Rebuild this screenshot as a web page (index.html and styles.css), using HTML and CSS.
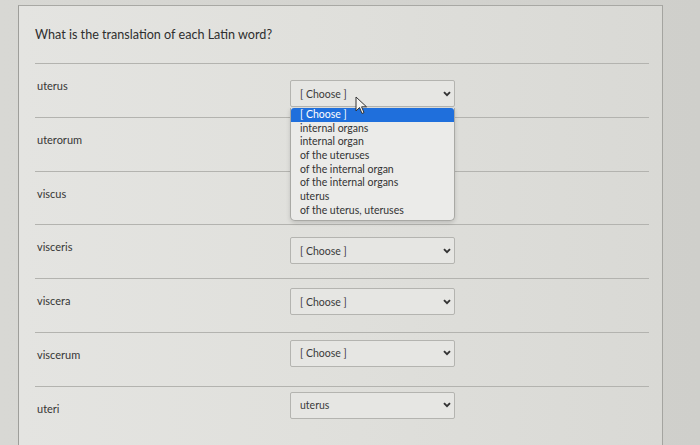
FILE: index.html
```html
<!DOCTYPE html>
<html>
<head>
<meta charset="utf-8">
<link rel="stylesheet" href="styles.css">
</head>
<body>
<div class="frame">
  <div class="question">
    <p class="title">What is the translation of each Latin word?</p>
    <div class="rows">
      <div class="row">
        <span class="label">uterus</span>
        <div class="select-wrap">
          <div class="select"><span>[ Choose ]</span><svg class="chev" width="8" height="6" viewBox="0 0 8 6"><path d="M1 1.2 L4 4.2 L7 1.2" fill="none" stroke="#333" stroke-width="1.9"/></svg></div>
          <ul class="dropdown">
            <li class="active">[ Choose ]</li>
            <li>internal organs</li>
            <li>internal organ</li>
            <li>of the uteruses</li>
            <li>of the internal organ</li>
            <li>of the internal organs</li>
            <li>uterus</li>
            <li>of the uterus, uteruses</li>
          </ul>
          <svg class="cursor" width="14" height="20" viewBox="0 0 14 20"><path d="M1 1 L1 15 L4.5 11.5 L7 17.5 L9 16.6 L6.6 10.8 L11.5 10.8 Z" fill="#f4f4f2" stroke="#333" stroke-width="1"/></svg>
        </div>
      </div>
      <div class="row">
        <span class="label">uterorum</span>
        <div class="select-wrap covered">
          <div class="select"><span>[ Choose ]</span><svg class="chev" width="8" height="6" viewBox="0 0 8 6"><path d="M1 1.2 L4 4.2 L7 1.2" fill="none" stroke="#333" stroke-width="1.9"/></svg></div>
        </div>
      </div>
      <div class="row">
        <span class="label">viscus</span>
        <div class="select-wrap covered">
          <div class="select"><span>[ Choose ]</span><svg class="chev" width="8" height="6" viewBox="0 0 8 6"><path d="M1 1.2 L4 4.2 L7 1.2" fill="none" stroke="#333" stroke-width="1.9"/></svg></div>
        </div>
      </div>
      <div class="row">
        <span class="label">visceris</span>
        <div class="select-wrap">
          <div class="select"><span>[ Choose ]</span><svg class="chev" width="8" height="6" viewBox="0 0 8 6"><path d="M1 1.2 L4 4.2 L7 1.2" fill="none" stroke="#333" stroke-width="1.9"/></svg></div>
        </div>
      </div>
      <div class="row">
        <span class="label">viscera</span>
        <div class="select-wrap">
          <div class="select"><span>[ Choose ]</span><svg class="chev" width="8" height="6" viewBox="0 0 8 6"><path d="M1 1.2 L4 4.2 L7 1.2" fill="none" stroke="#333" stroke-width="1.9"/></svg></div>
        </div>
      </div>
      <div class="row">
        <span class="label">viscerum</span>
        <div class="select-wrap">
          <div class="select"><span>[ Choose ]</span><svg class="chev" width="8" height="6" viewBox="0 0 8 6"><path d="M1 1.2 L4 4.2 L7 1.2" fill="none" stroke="#333" stroke-width="1.9"/></svg></div>
        </div>
      </div>
      <div class="row">
        <span class="label">uteri</span>
        <div class="select-wrap">
          <div class="select"><span>uterus</span><svg class="chev" width="8" height="6" viewBox="0 0 8 6"><path d="M1 1.2 L4 4.2 L7 1.2" fill="none" stroke="#333" stroke-width="1.9"/></svg></div>
        </div>
      </div>
    </div>
  </div>
</div>
</body>
</html>
```

FILE: styles.css
```css
html, body {
  margin: 0;
  padding: 0;
}
body {
  width: 700px;
  height: 445px;
  overflow: hidden;
  background: linear-gradient(90deg, #d8d8d4 0%, #cfcfcb 100%);
  font-family: Lato, "Open Sans", sans-serif;
  color: #333;
}
.frame {
  margin: 5px 0 0 18px;
  width: 643px;
  height: 440px;
  border-left: 1px solid #9e9e9a;
  border-top: 1px solid #a8a8a4;
  border-right: 1px solid #a4a4a0;
  background: linear-gradient(90deg, #e4e4e1 0%, #e0e0dc 45%, #d9d9d5 100%);
}
.question {
  padding: 0 13px 0 16px;
}
.title {
  margin: 0;
  padding-top: 21px;
  height: 36px;
  font-size: 12.6px;
  line-height: 16px;
  color: #2e2e2e;
}
.row {
  height: 53.8px;
  box-sizing: border-box;
  border-top: 1px solid #b3b3af;
  display: grid;
  grid-template-columns: 255px 165px;
  align-items: start;
}
.label {
  padding: 15px 0 0 2px;
  font-size: 11px;
  line-height: 14px;
  color: #363636;
}
.select-wrap {
  position: relative;
  margin-top: 12px;
}
.row:first-child .select-wrap {
  margin-top: 16px;
}
.row:nth-child(5) .select-wrap {
  margin-top: 9px;
}
.row:nth-child(6) .select-wrap {
  margin-top: 7px;
}
.row:nth-child(7) .select-wrap {
  margin-top: 5px;
}
.covered {
  visibility: hidden;
}
.select {
  height: 27px;
  box-sizing: border-box;
  border: 1px solid #b4b4b0;
  border-radius: 2px;
  background: #e6e6e3;
  display: flex;
  align-items: center;
  justify-content: space-between;
  padding: 0 3px 0 9px;
  font-size: 10.5px;
  color: #3a3a3a;
}
.chev {
  display: block;
}
.dropdown {
  position: absolute;
  top: 28px;
  left: 0;
  width: 165px;
  box-sizing: border-box;
  margin: 0;
  padding: 0 0 2px 0;
  list-style: none;
  background: #ebebe9;
  border: 1px solid #a9a9a5;
  border-top: none;
  border-radius: 0 0 5px 5px;
  box-shadow: 0 2px 4px rgba(0,0,0,0.15);
  z-index: 2;
}
.dropdown li {
  height: 13.7px;
  line-height: 13.7px;
  padding-left: 9px;
  font-size: 10.5px;
  color: #333;
  white-space: nowrap;
}
.dropdown li.active {
  background: #1f6fdc;
  color: #fff;
  border-radius: 3px 3px 0 0;
}
.cursor {
  position: absolute;
  left: 65px;
  top: 16px;
  z-index: 3;
}
```
